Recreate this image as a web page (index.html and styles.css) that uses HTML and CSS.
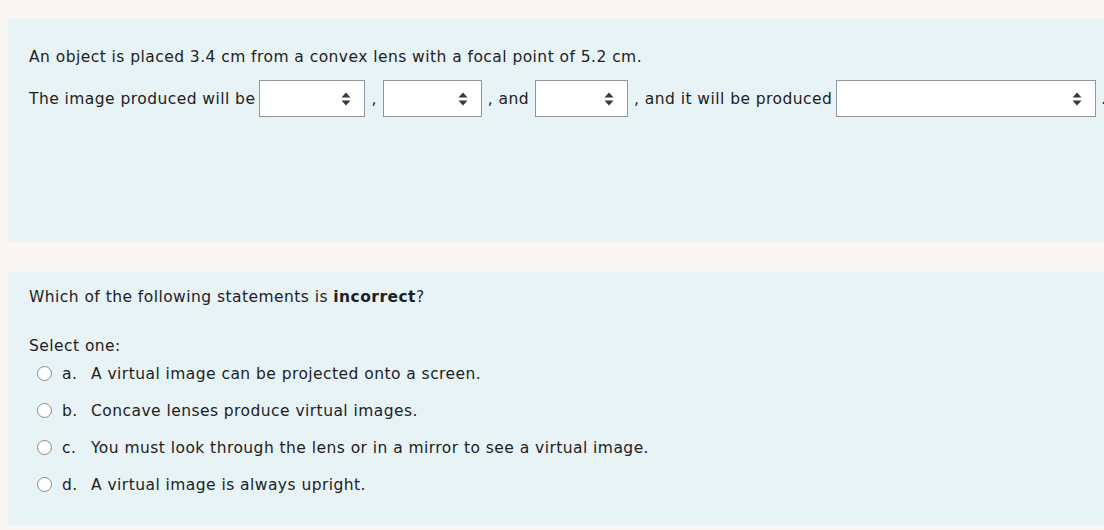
FILE: index.html
```html
<!DOCTYPE html>
<html>
<head>
<meta charset="utf-8">
<link rel="stylesheet" href="styles.css">
</head>
<body>
<div class="page">
  <section class="panel panel-one">
    <p class="line">An object is placed 3.4 cm from a convex lens with a focal point of 5.2 cm.</p>
    <div class="fill-row">
      <span>The image produced will be</span>
      <span class="select s1"><svg class="arrows" viewBox="0 0 10 14" width="10" height="14"><path d="M5 0.5 L9.5 5.5 H0.5 Z M5 13.5 L9.5 8.5 H0.5 Z" fill="#343a40"/></svg></span>
      <span class="sep">,</span>
      <span class="select s2"><svg class="arrows" viewBox="0 0 10 14" width="10" height="14"><path d="M5 0.5 L9.5 5.5 H0.5 Z M5 13.5 L9.5 8.5 H0.5 Z" fill="#343a40"/></svg></span>
      <span class="sep">, and</span>
      <span class="select s3"><svg class="arrows" viewBox="0 0 10 14" width="10" height="14"><path d="M5 0.5 L9.5 5.5 H0.5 Z M5 13.5 L9.5 8.5 H0.5 Z" fill="#343a40"/></svg></span>
      <span class="sep">, and it will be produced</span>
      <span class="select s4"><svg class="arrows" viewBox="0 0 10 14" width="10" height="14"><path d="M5 0.5 L9.5 5.5 H0.5 Z M5 13.5 L9.5 8.5 H0.5 Z" fill="#343a40"/></svg></span>
      <span class="sep">.</span>
    </div>
  </section>
  <section class="panel panel-two">
    <p class="line">Which of the following statements is <strong>incorrect</strong>?</p>
    <p class="select-one">Select one:</p>
    <ul class="options">
      <li><span class="radio"></span><span class="letter">a.</span><span>A virtual image can be projected onto a screen.</span></li>
      <li><span class="radio"></span><span class="letter">b.</span><span>Concave lenses produce virtual images.</span></li>
      <li><span class="radio"></span><span class="letter">c.</span><span>You must look through the lens or in a mirror to see a virtual image.</span></li>
      <li><span class="radio"></span><span class="letter">d.</span><span>A virtual image is always upright.</span></li>
    </ul>
  </section>
</div>
</body>
</html>
```
FILE: styles.css
```css
html, body {
  margin: 0;
  padding: 0;
  background: #f9f6f3;
}
body {
  font-family: "DejaVu Sans", Verdana, sans-serif;
  font-size: 15.5px;
  letter-spacing: 0.45px;
  color: #1d2125;
  width: 1104px;
  height: 530px;
  overflow: hidden;
}
.page {
  padding-top: 19px;
}
.panel {
  background: #e7f3f5;
  margin-left: 8px;
  padding-left: 21px;
  box-sizing: border-box;
}
.panel-one {
  height: 223px;
  padding-top: 28px;
}
.panel-two {
  margin-top: 30px;
  height: 253px;
  padding-top: 15px;
}
.line {
  margin: 0;
  line-height: 20px;
  white-space: nowrap;
}
.fill-row {
  display: flex;
  align-items: center;
  margin-top: 13px;
  white-space: nowrap;
  line-height: 20px;
}
.fill-row > * {
  flex-shrink: 0;
}
.select {
  display: flex;
  align-items: center;
  justify-content: flex-end;
  height: 37px;
  box-sizing: border-box;
  background: #fff;
  border: 1px solid #8f959e;
  padding-right: 13px;
  margin: 0 5px;
}
.s1 { width: 106px; margin-left: 4px; }
.s2 { width: 99px; }
.s3 { width: 93px; }
.s4 { width: 260px; margin-left: 3px; margin-right: 4px; }
.sep { padding: 0 1px; }
.arrows { display: block; }
.select-one {
  margin: 29px 0 0;
  line-height: 20px;
}
.options {
  list-style: none;
  margin: 0;
  padding: 0;
}
.options li {
  display: flex;
  align-items: center;
  height: 37px;
}
.options li:first-child {
  margin-top: -1px;
}
.radio {
  width: 15px;
  height: 15px;
  box-sizing: border-box;
  border: 1px solid #8a8a8a;
  border-radius: 50%;
  background: #fff;
  margin-left: 8px;
  margin-right: 10px;
}
.letter {
  width: 29px;
}
```
